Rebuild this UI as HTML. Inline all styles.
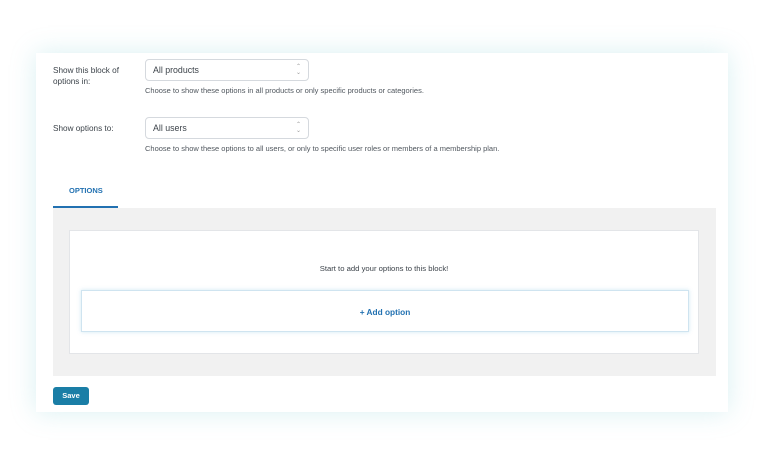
<!DOCTYPE html>
<html><head><style>
*{box-sizing:border-box;margin:0;padding:0}
body{width:768px;height:456px;background:#fff;font-family:"Liberation Sans",sans-serif;position:relative;overflow:hidden}
.card{position:absolute;left:36px;top:53px;width:692px;height:359px;background:#fff;box-shadow:0 0 24px rgba(120,200,210,.28)}
.abs{position:absolute}
.lbl{font-size:8.2px;color:#3c434a;line-height:11px}
.sel{position:absolute;left:145px;width:164px;height:22px;border:1px solid #d5d9de;border-radius:4px;font-size:8.8px;color:#3c434a;padding:5px 7px}
.hint{font-size:7.5px;color:#50575e;position:absolute;left:145px}
.arr{position:absolute;right:7px;top:4px;font-size:6px;color:#999;line-height:6px}
</style></head><body>
<div class="card"></div>
<div class="abs lbl" style="left:53px;top:65px">Show this block of<br>options in:</div>
<div class="sel" style="top:59px">All products<span class="arr">⌃<br>⌄</span></div>
<div class="hint" style="top:86px">Choose to show these options in all products or only specific products or categories.</div>
<div class="abs lbl" style="left:53px;top:123px">Show options to:</div>
<div class="sel" style="top:117px">All users<span class="arr">⌃<br>⌄</span></div>
<div class="hint" style="top:144px">Choose to show these options to all users, or only to specific user roles or members of a membership plan.</div>
<div class="abs" style="left:69px;top:186px;font-size:7.5px;font-weight:bold;color:#2271b1">OPTIONS</div>
<div class="abs" style="left:53px;top:206px;width:65px;height:2px;background:#2271b1"></div>
<div class="abs" style="left:53px;top:208px;width:663px;height:168px;background:#f1f1f1"></div>
<div class="abs" style="left:69px;top:230px;width:630px;height:124px;background:#fff;border:1px solid #e3e5e8"></div>
<div class="abs" style="left:0;width:768px;text-align:center;top:264px;font-size:7.7px;color:#3c434a">Start to add your options to this block!</div>
<div class="abs" style="left:81px;top:290px;width:608px;height:42px;border:1px solid #cfe4f0;box-shadow:0 0 4px rgba(120,190,220,.35);text-align:center;padding-top:16px;font-size:8.3px;font-weight:bold;color:#2271b1">+ Add option</div>
<div class="abs" style="left:53px;top:387px;width:36px;height:18px;background:#1a7ea6;border-radius:3px;color:#fff;font-size:7.5px;font-weight:bold;text-align:center;line-height:18px">Save</div>
</body></html>
